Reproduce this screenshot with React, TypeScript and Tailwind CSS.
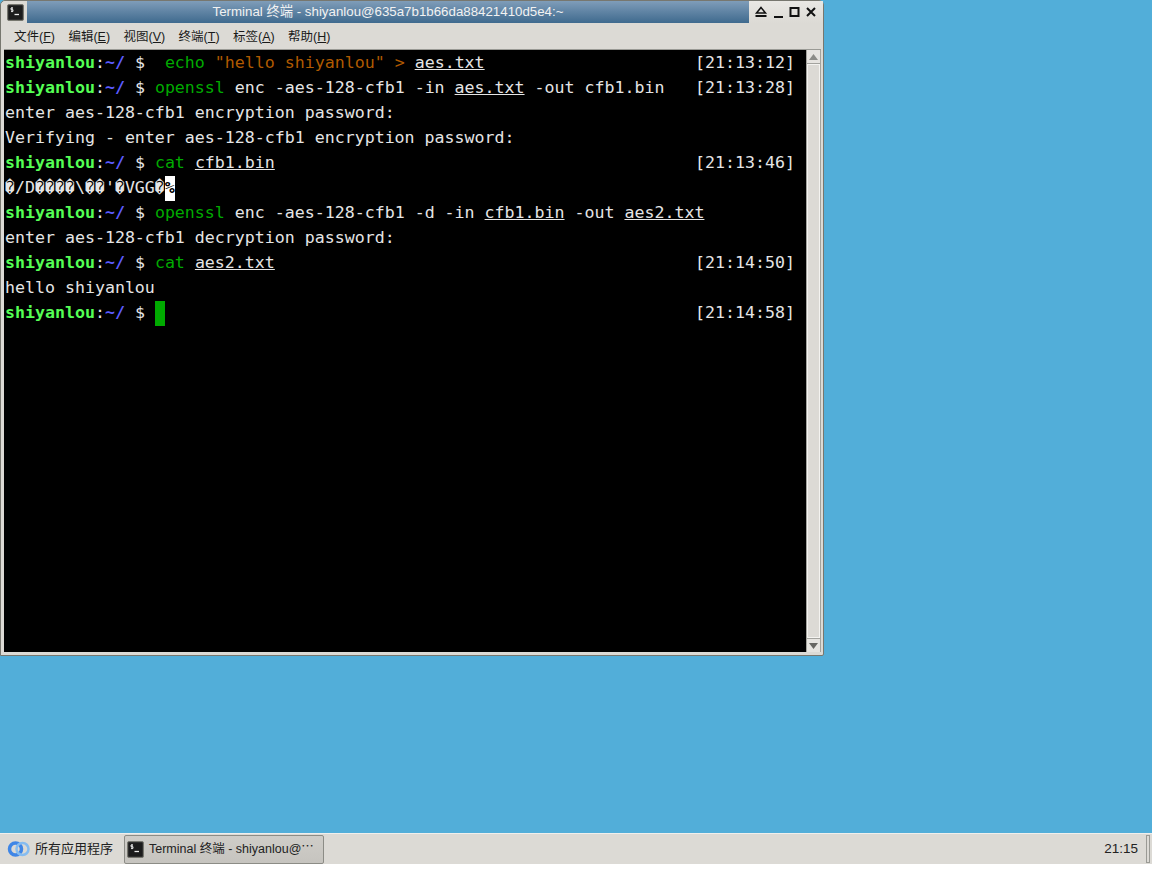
const MONO = "font-['DejaVu_Sans_Mono','Liberation_Mono',monospace]";

function Prompt() {
  return (
    <>
      <span className="font-bold text-[#55ff55]">shiyanlou</span>
      <span className="text-[#e5e5e5]">:</span>
      <span className="font-bold text-[#5c5cff]">~/</span>
      <span className="text-[#e5e5e5]"> $ </span>
    </>
  );
}

function Line({ children, time }: { children: React.ReactNode; time?: string }) {
  return (
    <div className="flex h-[25px] justify-between leading-[24px] whitespace-pre">
      <div>{children}</div>
      {time && <div>{time}</div>}
    </div>
  );
}

function TermIcon({ size }: { size: number }) {
  return (
    <svg width={size} height={size} viewBox="0 0 17 17">
      <rect x="0.5" y="0.5" width="16" height="16" rx="1.5" fill="#2e2e2e" stroke="#77776f" />
      <rect x="2" y="2" width="13" height="13" fill="#1c1c1c" />
      <path d="M6 4H4v1.7h2v1.7H4M5 3v5.2" stroke="#ececec" strokeWidth="0.9" fill="none" />
      <path d="M7.5 10.5h4.5" stroke="#ececec" strokeWidth="1.3" />
    </svg>
  );
}

function Menu({ label, k }: { label: string; k: string }) {
  return (
    <span>
      {label}(<span className="underline">{k}</span>)
    </span>
  );
}

export default function App() {
  return (
    <div className="flex h-[896px] w-[1152px] flex-col overflow-hidden bg-white font-['Liberation_Sans','Noto_Sans_CJK_SC',sans-serif]">
      <div className="h-[833px] bg-[#52aed9]">
        <div className="flex h-[656px] w-[824px] flex-col rounded-t-[5px] rounded-br-[2px] border border-[#77776f] bg-[#dcdad5]">
          <div className="flex h-[22px] items-stretch">
            <div className="flex w-[26px] items-center justify-center rounded-tl-[5px] bg-[#dcdad5] pl-[2px] pt-[1px]">
              <TermIcon size={17} />
            </div>
            <div className="flex w-[722px] items-center justify-center bg-gradient-to-b from-[#7f9db9] to-[#3f6a8e] pb-[1px] text-[13.3px] text-[#f2f2f2]">
              Terminal 终端 - shiyanlou@635a7b1b66da88421410d5e4:~
            </div>
            <div className="flex flex-1 items-center gap-[5px] bg-gradient-to-b from-[#e9e8e4] to-[#dcdad5] pl-[5px]">
              <svg width="14" height="14" viewBox="0 0 14 14">
                <path d="M7 2.5 11.5 8h-9z" fill="none" stroke="#111" strokeWidth="1.5" />
                <path d="M1.5 11h11" stroke="#111" strokeWidth="2" />
              </svg>
              <svg width="11" height="14" viewBox="0 0 11 14">
                <path d="M1 12h9" stroke="#111" strokeWidth="2" />
              </svg>
              <svg width="11" height="14" viewBox="0 0 11 14">
                <rect x="1.5" y="3" width="8" height="8" fill="none" stroke="#111" strokeWidth="2" />
              </svg>
              <svg width="12" height="14" viewBox="0 0 12 14">
                <path d="M2 3l8 8M10 3l-8 8" stroke="#111" strokeWidth="2" />
              </svg>
            </div>
          </div>
          <div className="flex h-[26px] items-center gap-[13.4px] pl-[13px] pt-[2px] text-[12.5px] text-[#1a1a1a]">
            <Menu label="文件" k="F" />
            <Menu label="编辑" k="E" />
            <Menu label="视图" k="V" />
            <Menu label="终端" k="T" />
            <Menu label="标签" k="A" />
            <Menu label="帮助" k="H" />
          </div>
          <div className="ml-[3px] mr-[2px] flex min-h-0 flex-1 border-t border-[#9a9a95] pb-[3px]">
            <div className={`flex-1 bg-black pl-[1px] pr-[11px] pt-[1px] text-[16.6px] text-[#e5e5e5] ${MONO}`}>
              <Line time="[21:13:12]">
                <Prompt />
                <span className="text-[#00aa00]"> echo</span> <span className="text-[#b05a00]">"hello shiyanlou" &gt;</span>{" "}
                <span className="underline">aes.txt</span>
              </Line>
              <Line time="[21:13:28]">
                <Prompt />
                <span className="text-[#00aa00]">openssl</span> enc -aes-128-cfb1 -in <span className="underline">aes.txt</span> -out cfb1.bin
              </Line>
              <Line>enter aes-128-cfb1 encryption password:</Line>
              <Line>Verifying - enter aes-128-cfb1 encryption password:</Line>
              <Line time="[21:13:46]">
                <Prompt />
                <span className="text-[#00aa00]">cat</span> <span className="underline">cfb1.bin</span>
              </Line>
              <Line>
                {"\uFFFD/D\uFFFD\uFFFD\uFFFD\uFFFD\\\uFFFD\uFFFD'\uFFFDVGG\uFFFD"}
                <span className="inline-block h-[25px] w-[10px] bg-white align-top font-bold text-black">%</span>
              </Line>
              <Line>
                <Prompt />
                <span className="text-[#00aa00]">openssl</span> enc -aes-128-cfb1 -d -in <span className="underline">cfb1.bin</span> -out{" "}
                <span className="underline">aes2.txt</span>
              </Line>
              <Line>enter aes-128-cfb1 decryption password:</Line>
              <Line time="[21:14:50]">
                <Prompt />
                <span className="text-[#00aa00]">cat</span> <span className="underline">aes2.txt</span>
              </Line>
              <Line>hello shiyanlou</Line>
              <Line time="[21:14:58]">
                <Prompt />
                <span className="inline-block h-[25px] w-[10px] bg-[#00aa00] align-top" />
              </Line>
            </div>
            <div className="flex w-[15px] flex-col border-x border-[#a3a39e] bg-[#d4d2cd]">
              <div className="flex h-[14px] items-center justify-center border-b border-[#a3a39e] bg-[#e6e4e0]">
                <svg width="9" height="6" viewBox="0 0 9 6">
                  <path d="M4.5 0 9 6H0z" fill="#8c8c88" />
                </svg>
              </div>
              <div className="flex-1 border border-[#f4f3f0] bg-[#dcdad5]" />
              <div className="flex h-[14px] items-center justify-center border-t border-[#a3a39e] bg-[#e6e4e0]">
                <svg width="9" height="6" viewBox="0 0 9 6">
                  <path d="M0 0h9L4.5 6z" fill="#666662" />
                </svg>
              </div>
            </div>
          </div>
        </div>
      </div>
      <div className="flex h-[31px] items-center border-t border-[#f0efec] bg-[#dcdad5] text-[13px] text-[#222]">
        <div className="flex w-[124px] items-center pl-[7px]">
          <svg width="24" height="18" viewBox="0 0 24 18">
            <circle cx="8.5" cy="9" r="6" fill="none" stroke="#3f86e6" strokeWidth="3.5" />
            <circle cx="15.5" cy="9" r="6" fill="none" stroke="#86bcf0" strokeWidth="2.5" />
          </svg>
          <span className="ml-[4px]">所有应用程序</span>
        </div>
        <div className="flex h-[29px] w-[200px] items-center rounded-[2px] border border-[#8c8c86] bg-gradient-to-b from-[#cfcdc8] to-[#c6c4bf] pl-[2px]">
          <TermIcon size={17} />
          <span className="ml-[5px] text-[12.5px]">
            Terminal 终端 - shiyanlou@
            <span className="inline-block -translate-y-[2px] font-['Noto_Sans_CJK_SC']">⋯</span>
          </span>
        </div>
        <div className="flex-1" />
        <span className="mr-[8px] text-[13.5px]">21:15</span>
        <div className="mr-[2px] h-[28px] w-[4px] border border-[#9a9a95]" />
      </div>
      <div className="flex-1 bg-white" />
    </div>
  );
}
